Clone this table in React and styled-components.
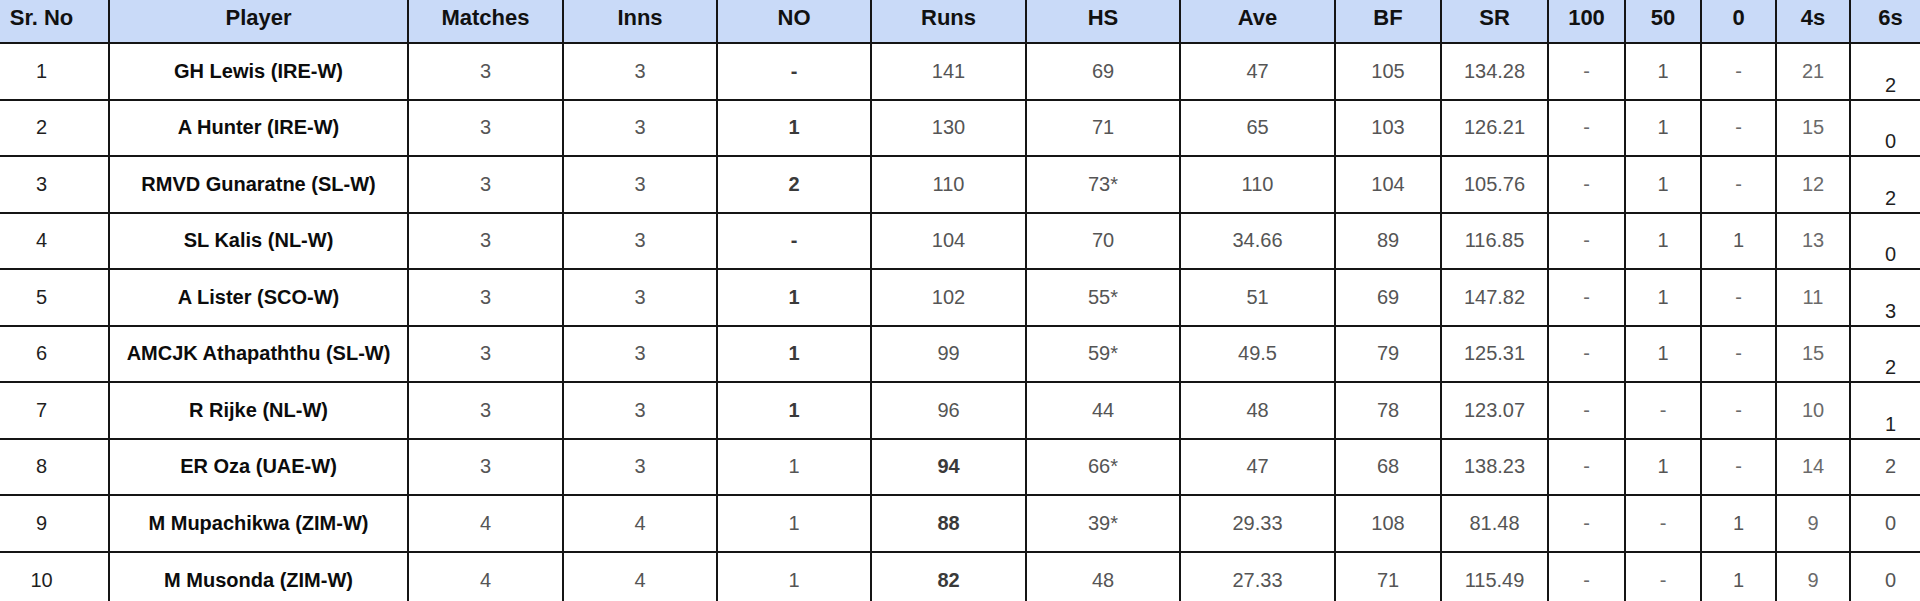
import React from 'react'
import styled, { createGlobalStyle } from 'styled-components'

const GlobalStyle = createGlobalStyle`
    html, body {
        margin: 0;
        padding: 0;
        background: #ffffff;
    }
    body {
        font-family: "Liberation Sans", Arial, sans-serif;
    }
`

const lineColor = '#151515'

const Page = styled.div`
    width: 1920px;
    height: 601px;
    overflow: hidden;
    background: #ffffff;
`

const StatsTable = styled.table`
    width: 1955px;
    margin: -6px 0 0 -25px;
    border-collapse: collapse;
    border-style: hidden;
    table-layout: fixed;
    font-family: "Liberation Sans", Arial, sans-serif;
`

const HeadRow = styled.tr`
    height: 49px;
    background: #c9daf8;
`

const HeadCell = styled.th`
    border: 2px solid ${lineColor};
    padding: 0 4px;
    font-size: 22px;
    font-weight: 700;
    color: #111111;
    text-align: center;
    vertical-align: middle;
    white-space: nowrap;
    overflow: hidden;
`

const BodyRow = styled.tr`
    height: 56.5px;
`

const tones = {
    dark: '#1f1f1f',
    strong: '#3a3a3a',
    muted: '#555555',
    soft: '#6a6a6a',
}

const Cell = styled.td`
    border: 2px solid ${lineColor};
    padding: ${p => (p.$low ? '0 4px 2px' : '0 4px')};
    font-size: 20px;
    font-weight: ${p => (p.$bold ? 700 : 400)};
    color: ${p => tones[p.$tone] || tones.muted};
    text-align: center;
    vertical-align: ${p => (p.$low ? 'bottom' : 'middle')};
    white-space: nowrap;
    overflow: hidden;
`

const PlayerCell = styled(Cell)`
    font-weight: 700;
    color: #0c0c0c;
`

const columns = [
    { key: 'sr', label: 'Sr. No', width: 134 },
    { key: 'player', label: 'Player', width: 299 },
    { key: 'mat', label: 'Matches', width: 155 },
    { key: 'inns', label: 'Inns', width: 154 },
    { key: 'no', label: 'NO', width: 154 },
    { key: 'runs', label: 'Runs', width: 155 },
    { key: 'hs', label: 'HS', width: 154 },
    { key: 'ave', label: 'Ave', width: 155 },
    { key: 'bf', label: 'BF', width: 106 },
    { key: 'sr2', label: 'SR', width: 107 },
    { key: 'h', label: '100', width: 77 },
    { key: 'f', label: '50', width: 76 },
    { key: 'z', label: '0', width: 75 },
    { key: 'fours', label: '4s', width: 74 },
    { key: 'sixes', label: '6s', width: 80 },
]

const rows = [
    ['1', 'GH Lewis (IRE-W)', '3', '3', '-', '141', '69', '47', '105', '134.28', '-', '1', '-', '21', '2'],
    ['2', 'A Hunter (IRE-W)', '3', '3', '1', '130', '71', '65', '103', '126.21', '-', '1', '-', '15', '0'],
    ['3', 'RMVD Gunaratne (SL-W)', '3', '3', '2', '110', '73*', '110', '104', '105.76', '-', '1', '-', '12', '2'],
    ['4', 'SL Kalis (NL-W)', '3', '3', '-', '104', '70', '34.66', '89', '116.85', '-', '1', '1', '13', '0'],
    ['5', 'A Lister (SCO-W)', '3', '3', '1', '102', '55*', '51', '69', '147.82', '-', '1', '-', '11', '3'],
    ['6', 'AMCJK Athapaththu (SL-W)', '3', '3', '1', '99', '59*', '49.5', '79', '125.31', '-', '1', '-', '15', '2'],
    ['7', 'R Rijke (NL-W)', '3', '3', '1', '96', '44', '48', '78', '123.07', '-', '-', '-', '10', '1'],
    ['8', 'ER Oza (UAE-W)', '3', '3', '1', '94', '66*', '47', '68', '138.23', '-', '1', '-', '14', '2'],
    ['9', 'M Mupachikwa (ZIM-W)', '4', '4', '1', '88', '39*', '29.33', '108', '81.48', '-', '-', '1', '9', '0'],
    ['10', 'M Musonda (ZIM-W)', '4', '4', '1', '82', '48', '27.33', '71', '115.49', '-', '-', '1', '9', '0'],
]

function cellProps(colIndex, rowIndex, value) {
    const early = rowIndex < 7
    if (colIndex === 0) return { $tone: 'dark' }
    if (colIndex === 4) return early ? { $bold: true, $tone: 'strong' } : { $tone: 'muted' }
    if (colIndex === 5) return early ? { $tone: 'muted' } : { $bold: true, $tone: 'strong' }
    if (colIndex === 14) return early ? { $low: true, $tone: 'dark' } : { $tone: 'muted' }
    if (value === '-' || colIndex === 13) return { $tone: 'soft' }
    return { $tone: 'muted' }
}

function App() {
    return (
        <Page>
            <GlobalStyle />
            <StatsTable>
                <colgroup>
                    {columns.map(c => (
                        <col key={c.key} style={{ width: c.width }} />
                    ))}
                </colgroup>
                <thead>
                    <HeadRow>
                        {columns.map(c => (
                            <HeadCell key={c.key}>{c.label}</HeadCell>
                        ))}
                    </HeadRow>
                </thead>
                <tbody>
                    {rows.map((row, r) => (
                        <BodyRow key={row[0]}>
                            {row.map((value, c) =>
                                c === 1 ? (
                                    <PlayerCell key={c}>{value}</PlayerCell>
                                ) : (
                                    <Cell key={c} {...cellProps(c, r, value)}>{value}</Cell>
                                )
                            )}
                        </BodyRow>
                    ))}
                </tbody>
            </StatsTable>
        </Page>
    )
}

export default App
